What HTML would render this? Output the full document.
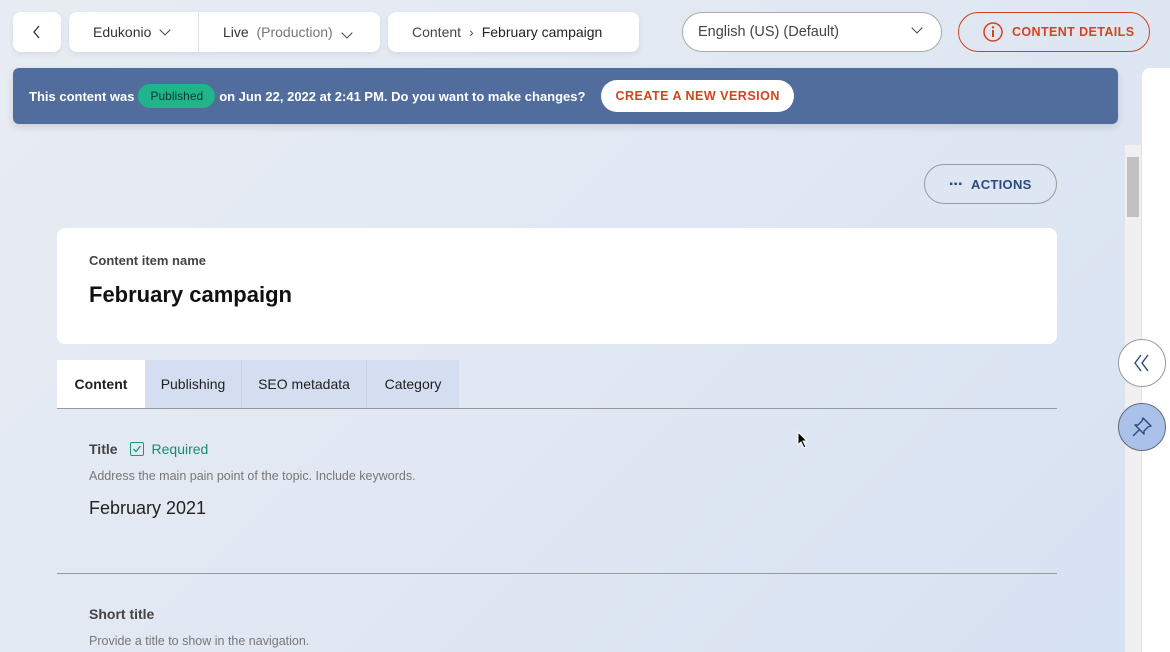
<!DOCTYPE html>
<html><head><meta charset="utf-8"><style>
*{box-sizing:border-box;margin:0;padding:0}
body{width:1170px;height:652px;overflow:hidden;font-family:"Liberation Sans",sans-serif;background:linear-gradient(135deg,#e8ecf3 0%,#e1e8f3 50%,#d6e1f2 100%);position:relative;color:#1f1f1f}
.box{position:absolute;background:#fff;border-radius:8px;box-shadow:0 2px 6px rgba(0,0,0,.08);font-size:14px;color:#333;display:flex;align-items:center}
.chev{display:inline-block;width:8px;height:8px;border-right:1.3px solid #444;border-bottom:1.3px solid #444;transform:rotate(45deg);margin-left:10px;margin-top:-5px}
.abs{position:absolute}
</style></head><body>
<div class="box" style="left:13px;top:12px;width:48px;height:40px;justify-content:center"><svg width="12" height="16"><path d="M8 2 L3 8 L8 14" fill="none" stroke="#333" stroke-width="1.3"/></svg></div>
<div class="box" style="left:69px;top:12px;width:311px;height:40px">
 <div style="width:130px;padding-left:24px;border-right:1px solid #e3e3e3;height:100%;display:flex;align-items:center">Edukonio<span class="chev"></span></div>
 <div style="padding-left:24px">Live <span style="color:#777">&nbsp;(Production)</span><span class="chev"></span></div>
</div>
<div class="box" style="left:388px;top:12px;width:251px;height:40px;padding-left:24px;color:#444">Content <span style="margin:0 8px;color:#555">›</span> <span style="color:#222">February campaign</span></div>
<div class="box" style="left:682px;top:12px;width:260px;height:40px;border-radius:20px;border:1px solid #aaa;padding-left:15px;font-size:14.5px;color:#444;box-shadow:none">English (US) (Default)<span class="chev" style="position:absolute;right:20px;top:16px"></span></div>
<div class="box" style="left:958px;top:12px;width:192px;height:40px;border-radius:20px;border:1.3px solid #d4431b;background:transparent;box-shadow:none;color:#d4431b;font-weight:bold;font-size:12.5px;letter-spacing:.4px;padding-left:23px">
<svg width="22" height="22" style="margin-right:8px"><circle cx="11" cy="11" r="9" fill="none" stroke="#d4431b" stroke-width="1.5"/><rect x="10" y="9" width="2" height="7" fill="#d4431b"/><circle cx="11" cy="6.3" r="1.2" fill="#d4431b"/></svg>CONTENT DETAILS</div>
<div class="abs" style="left:13px;top:68px;width:1105px;height:56px;background:#506d9e;border-radius:6px;box-shadow:0 3px 8px rgba(0,0,0,.12);color:#fff;font-weight:bold;font-size:13px;display:flex;align-items:center;padding-left:16px">
This content was <span style="background:#1fb489;color:#0c3a2e;font-weight:normal;font-size:12px;border-radius:12px;padding:5px 12px;margin:0 4px">Published</span> on Jun 22, 2022 at 2:41 PM. Do you want to make changes?
<span style="background:#fff;color:#d4431b;border-radius:16px;padding:9px 14px;margin-left:16px;font-size:12.5px;letter-spacing:.5px">CREATE A NEW VERSION</span></div>
<div class="abs" style="left:1142px;top:68px;width:28px;height:584px;background:#fff;border-radius:8px 0 0 0"></div>
<div class="abs" style="left:1125px;top:145px;width:16px;height:507px;background:#f0f0f0"></div>
<div class="abs" style="left:1127px;top:157px;width:12px;height:60px;background:#c1c1c1"></div>
<div class="abs" style="left:924px;top:164px;width:133px;height:40px;border:1px solid #999;border-radius:20px;color:#2c4a7a;font-weight:bold;font-size:13px;display:flex;align-items:center;justify-content:center;letter-spacing:.3px"><span style="letter-spacing:1px;margin-right:8px;font-size:10px">▪▪▪</span>ACTIONS</div>
<div class="abs" style="left:57px;top:228px;width:1000px;height:116px;background:#fff;border-radius:8px;padding:25px 32px">
<div style="font-size:13px;color:#444;font-weight:bold">Content item name</div>
<div style="font-size:22px;font-weight:bold;margin-top:14px;color:#111">February campaign</div></div>
<div class="abs" style="left:57px;top:360px;height:48px;display:flex;font-size:14px">
<div style="width:88px;background:#fff;display:flex;align-items:center;justify-content:center;font-weight:bold">Content</div>
<div style="width:97px;background:#d4def0;display:flex;align-items:center;justify-content:center;border-right:1px solid #c9d4e8">Publishing</div>
<div style="width:125px;background:#d4def0;display:flex;align-items:center;justify-content:center;border-right:1px solid #c9d4e8">SEO metadata</div>
<div style="width:92px;background:#d4def0;display:flex;align-items:center;justify-content:center">Category</div></div>
<div class="abs" style="left:57px;top:408px;width:1000px;height:1px;background:#999"></div>
<div class="abs" style="left:89px;top:441px;font-size:14px;color:#444;font-weight:bold;display:flex;align-items:center">Title <span style="display:inline-block;width:14px;height:14px;border:1.3px solid #1a9a7a;border-radius:2px;margin:0 8px 0 12px;position:relative"><svg width="12" height="12" style="position:absolute;left:0;top:0"><path d="M2.5 6 L5 8.5 L9.5 3" fill="none" stroke="#1a9a7a" stroke-width="1.3"/></svg></span><span style="color:#1a8a6e;font-weight:normal">Required</span></div>
<div class="abs" style="left:89px;top:469px;font-size:12.5px;color:#777">Address the main pain point of the topic. Include keywords.</div>
<div class="abs" style="left:89px;top:498px;font-size:18px;color:#222">February 2021</div>
<div class="abs" style="left:57px;top:573px;width:1000px;height:1px;background:#999"></div>
<div class="abs" style="left:89px;top:606px;font-size:14px;color:#444;font-weight:bold">Short title</div>
<div class="abs" style="left:89px;top:634px;font-size:12.5px;color:#777">Provide a title to show in the navigation.</div>
<div class="abs" style="left:1118px;top:339px;width:48px;height:48px;border-radius:50%;background:#fff;border:1px solid #999;display:flex;align-items:center;justify-content:center"><svg width="22" height="22"><path d="M10 3 L4 11 L10 19 M17 3 L11 11 L17 19" fill="none" stroke="#2c4a7a" stroke-width="1.4"/></svg></div>
<div class="abs" style="left:1118px;top:403px;width:48px;height:48px;border-radius:50%;background:#aac2ea;border:1px solid #667;display:flex;align-items:center;justify-content:center"><svg width="24" height="24"><path d="M13 3 L21 11 L18 12 L14 16 L14 19 L5 10 L8 10 L12 6 Z M9 15 L3 21" fill="none" stroke="#2c4a7a" stroke-width="1.4" stroke-linejoin="round"/></svg></div>
<svg class="abs" style="left:797px;top:431px" width="12" height="18"><path d="M1 1 L1 14 L4 11 L7 17 L9 16 L6 10 L10 10 Z" fill="#000" stroke="#fff" stroke-width="1"/></svg>
</body></html>
